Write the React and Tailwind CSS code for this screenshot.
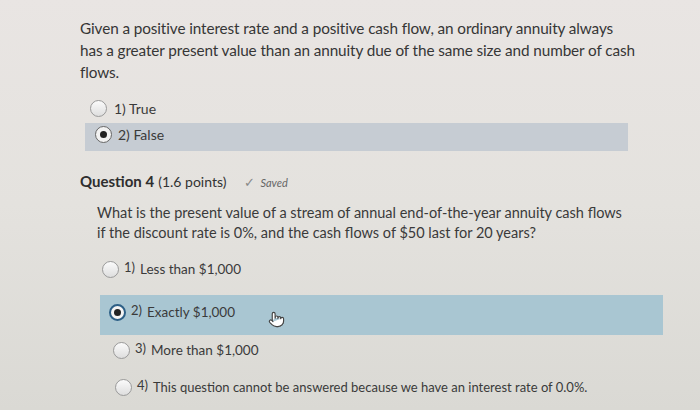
import React from 'react';
import { Pointer } from 'lucide-react';

function Radio({ checked, ring, className = '' }) {
  return (
    <span
      className={`inline-flex shrink-0 items-center justify-center rounded-full ${
        checked
          ? ring
            ? 'w-[17px] h-[17px] border-2 border-[#2d5f86] bg-[#f4f4f4]'
            : 'w-[17px] h-[17px] border-[1.5px] border-[#666] bg-[#f2f2f2]'
          : 'w-[17px] h-[17px] border border-[#9a9a9a] bg-gradient-to-b from-[#fbfbfb] to-[#dedede]'
      } ${className}`}
    >
      {checked && <span className="w-[7px] h-[7px] rounded-full bg-[#222]" />}
    </span>
  );
}

function Option({ num, label, checked, ring, className = '', textSize = 'text-[13.5px]' }) {
  return (
    <div className={`flex items-center ${className}`}>
      <Radio checked={checked} ring={ring} />
      <span className={`ml-[5px] ${textSize} text-[#3a3a3a]`}>
        <span className="relative -top-[2px] text-[13px] mr-[5px]">{num})</span>
        {label}
      </span>
    </div>
  );
}

export default function App() {
  return (
    <div
      className="w-[700px] h-[410px] overflow-hidden bg-gradient-to-b from-[#e9e5e3] via-[#e4e2de] to-[#dad9d4] text-[#363636]"
      style={{ fontFamily: 'Lato, "Noto Sans", sans-serif' }}
    >
      {/* first question */}
      <p className="pl-[80px] pt-[17px] text-[15.3px] leading-[22px] tracking-[-0.1px]">
        Given a positive interest rate and a positive cash flow, an ordinary annuity always
        <br />
        has a greater present value than an annuity due of the same size and number of cash
        <br />
        flows.
      </p>

      <div className="mt-[16px] ml-[90px] flex items-center h-[18px]">
        <Radio />
        <span className="ml-[7px] text-[14px] text-[#3a3a3a]">1) True</span>
      </div>

      <div className="mt-[6px] ml-[85px] w-[543px] h-[28px] bg-[#c6ccd3] flex items-start pt-[3px] pl-[10px]">
        <Radio checked />
        <span className="ml-[6px] text-[14px] leading-[17px] text-[#3a3a3a]">2) False</span>
      </div>

      {/* question 4 */}
      <div className="mt-[19px] ml-[80px] flex items-baseline">
        <span className="text-[15px] font-bold text-[#2e2e2e]">Question 4</span>
        <span className="ml-[4px] text-[14px] text-[#333]">(1.6 points)</span>
        <span className="ml-[18px] text-[11px] italic text-[#666]">
          <span className="not-italic text-[#888] text-[13px] mr-[5px]">✓</span>Saved
        </span>
      </div>

      <p className="mt-[10px] ml-[97px] text-[14.5px] leading-[20px] text-[#3a3a3a]">
        What is the present value of a stream of annual end-of-the-year annuity cash flows
        <br />
        if the discount rate is 0%, and the cash flows of $50 last for 20 years?
      </p>

      <Option num="1" label="Less than $1,000" className="mt-[17px] ml-[102px] h-[20px]" />

      <div className="relative mt-[15px] ml-[100px] w-[563px] h-[40px] bg-[#a9c6d2] flex items-center pl-[9px] pb-[4px]">
        <Option num="2" label="Exactly $1,000" checked ring />
        <Pointer
          size={17}
          strokeWidth={1.6}
          className="absolute left-[168px] top-[16px] text-[#444] fill-white"
        />
      </div>

      <Option num="3" label="More than $1,000" className="mt-[6px] ml-[113px] h-[20px]" />

      <Option
        num="4"
        label="This question cannot be answered because we have an interest rate of 0.0%."
        className="mt-[17px] ml-[115px] h-[20px]"
        textSize="text-[13px]"
      />
    </div>
  );
}
